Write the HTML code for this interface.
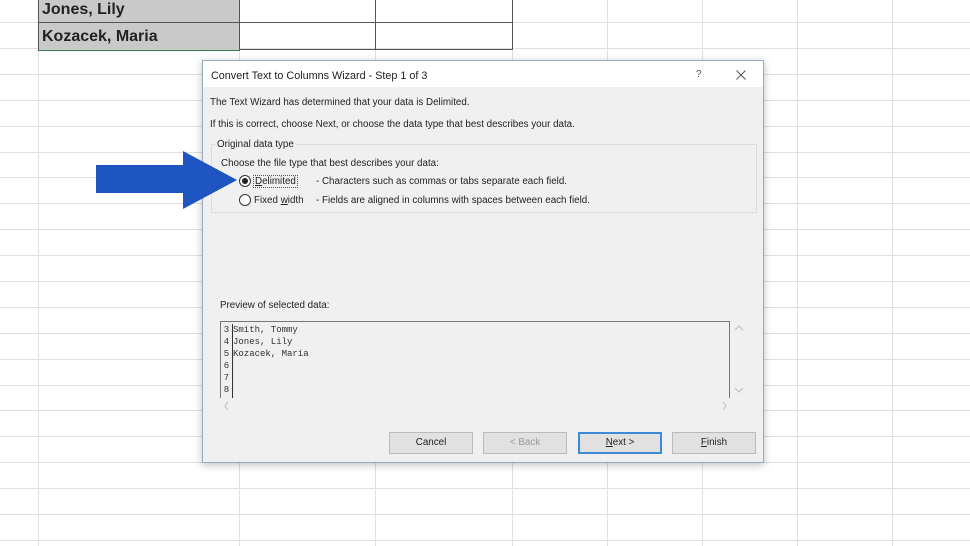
<!DOCTYPE html>
<html><head><style>
body{margin:0;width:970px;height:546px;overflow:hidden;position:relative;background:#fff;font-family:"Liberation Sans",sans-serif}
.g{position:absolute;background:#e0e0e0}
.d{position:absolute;left:202px;top:60px;width:560px;height:401px;background:#f0f0f0;border:1px solid #9ab;box-shadow:0 2px 8px rgba(0,0,0,.25)}
.t{position:absolute;font-size:9.8px;color:#222;white-space:nowrap}
.btn{position:absolute;top:371px;width:82px;height:20px;background:#e1e1e1;border:1px solid #bbb;font-size:9.8px;text-align:center;line-height:20px;color:#222}
.mono{font-family:"Liberation Mono",monospace;font-size:9px;line-height:12px;color:#333}
</style></head><body>
<div class="g" style="left:38px;top:0;width:1px;height:546px"></div>
<div class="g" style="left:239px;top:0;width:1px;height:546px"></div>
<div class="g" style="left:375px;top:0;width:1px;height:546px"></div>
<div class="g" style="left:512px;top:0;width:1px;height:546px"></div>
<div class="g" style="left:607px;top:0;width:1px;height:546px"></div>
<div class="g" style="left:702px;top:0;width:1px;height:546px"></div>
<div class="g" style="left:797px;top:0;width:1px;height:546px"></div>
<div class="g" style="left:892px;top:0;width:1px;height:546px"></div>
<div id="rows"></div>
<script>
var r=document.getElementById('rows'),h='';
for(var y=22;y<546;y+=25.9){h+='<div class="g" style="left:0;top:'+Math.round(y)+'px;width:970px;height:1px"></div>';}
r.innerHTML=h;
</script>
<div style="position:absolute;left:38px;top:-2px;width:201px;height:52px;background:#c9c9c9;border-left:1px solid #555;border-bottom:1px solid #3a7a50"></div>
<div style="position:absolute;left:38px;top:22px;width:474px;height:1px;background:#555"></div>
<div style="position:absolute;left:239px;top:49px;width:273px;height:1px;background:#555"></div>
<div style="position:absolute;left:239px;top:0;width:1px;height:50px;background:#555"></div>
<div style="position:absolute;left:375px;top:0;width:1px;height:50px;background:#555"></div>
<div style="position:absolute;left:512px;top:0;width:1px;height:50px;background:#555"></div>
<div style="position:absolute;left:42px;top:1px;font-size:16px;font-weight:bold;color:#222">Jones, Lily</div>
<div style="position:absolute;left:42px;top:28px;font-size:16px;font-weight:bold;color:#222">Kozacek, Maria</div>
<div class="d">
<div style="position:absolute;left:0;top:0;width:560px;height:26px;background:#fff"></div>
<div class="t" style="left:8px;top:9px;font-size:10.8px">Convert Text to Columns Wizard - Step 1 of 3</div>
<div class="t" style="left:493px;top:8px;font-size:10px;color:#555">?</div>
<svg style="position:absolute;left:533px;top:9px" width="10" height="10"><path d="M0.5 0.5L9.5 9.5M9.5 0.5L0.5 9.5" stroke="#555" stroke-width="1"/></svg>
<div class="t" style="left:7px;top:36px">The Text Wizard has determined that your data is Delimited.</div>
<div class="t" style="left:7px;top:58px">If this is correct, choose Next, or choose the data type that best describes your data.</div>
<div style="position:absolute;left:8px;top:83px;width:544px;height:67px;border:1px solid #dcdcdc"></div>
<div class="t" style="left:12px;top:78px;background:#f0f0f0;padding:0 2px">Original data type</div>
<div class="t" style="left:18px;top:97px">Choose the file type that best describes your data:</div>
<div style="position:absolute;left:36px;top:114px;width:10px;height:10px;border:1px solid #333;border-radius:50%;background:#fff"><div style="margin:2px;width:6px;height:6px;border-radius:50%;background:#222"></div></div>
<div class="t" style="left:50px;top:114px;border:1px dotted #555;padding:0 1px"><u>D</u>elimited</div>
<div class="t" style="left:113px;top:115px">- Characters such as commas or tabs separate each field.</div>
<div style="position:absolute;left:36px;top:133px;width:10px;height:10px;border:1px solid #333;border-radius:50%;background:#fff"></div>
<div class="t" style="left:51px;top:134px">Fixed <u>w</u>idth</div>
<div class="t" style="left:113px;top:134px">- Fields are aligned in columns with spaces between each field.</div>
<div class="t" style="left:17px;top:239px">Preview of selected data:</div>
<div style="position:absolute;left:17px;top:260px;width:508px;height:76px;border-top:1px solid #777;border-left:1px solid #777;border-right:1px solid #777;overflow:hidden">
<div class="mono" style="position:absolute;left:0;top:2px;width:11px;border-right:1px solid #333;text-align:center">3<br>4<br>5<br>6<br>7<br>8<br>&nbsp;</div>
<div class="mono" style="position:absolute;left:12px;top:2px">Smith, Tommy<br>Jones, Lily<br>Kozacek, Maria</div>
</div>
<svg style="position:absolute;left:531px;top:264px" width="10" height="70"><path d="M1 5L5 1L9 5M1 63L5 67L9 63" stroke="#bbb" fill="none"/></svg>
<svg style="position:absolute;left:20px;top:340px" width="505" height="10"><path d="M5 1L2 5L5 9M500 1L503 5L500 9" stroke="#bbb" fill="none"/></svg>
<div class="btn" style="left:186px">Cancel</div>
<div class="btn" style="left:280px;color:#999">&lt; Back</div>
<div class="btn" style="left:375px;border:2px solid #3c8ad8;height:18px;line-height:18px;width:80px"><u>N</u>ext &gt;</div>
<div class="btn" style="left:469px"><u>F</u>inish</div>
</div>
<svg style="position:absolute;left:0;top:0" width="970" height="546"><polygon points="96,165 183,165 183,151 237,180 183,209 183,193 96,193" fill="#1f55c0"/></svg>
</body></html>
